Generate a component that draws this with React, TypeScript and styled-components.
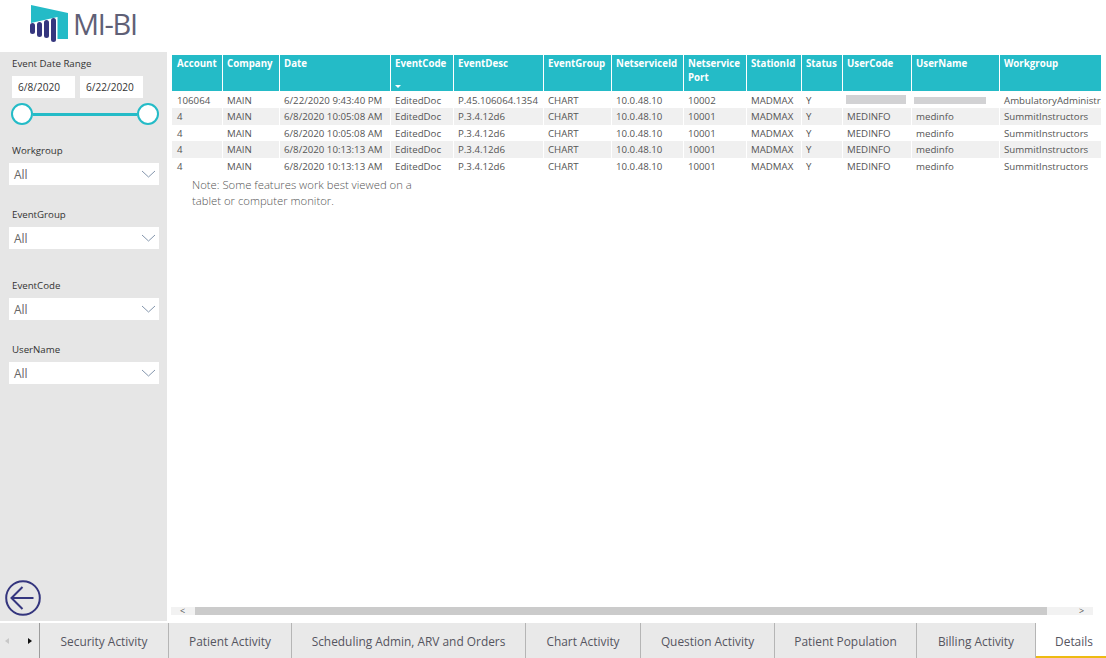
import React from "react";
import styled, { createGlobalStyle } from "styled-components";

const TEAL = "#24bbc7";
const NAVY = "#35367e";

const COLUMNS = [50, 56, 110, 62, 89, 67, 71, 62, 54, 40, 68, 87, 102];

const HEADERS = [
  "Account",
  "Company",
  "Date",
  "EventCode",
  "EventDesc",
  "EventGroup",
  "NetserviceId",
  "Netservice Port",
  "StationId",
  "Status",
  "UserCode",
  "UserName",
  "Workgroup",
];

const shared = ["EditedDoc", "P.3.4.12d6", "CHART", "10.0.48.10", "10001", "MADMAX", "Y", "MEDINFO", "medinfo", "SummitInstructors"];

const ROWS = [
  ["106064", "MAIN", "6/22/2020 9:43:40 PM", "EditedDoc", "P.45.106064.1354", "CHART", "10.0.48.10", "10002", "MADMAX", "Y", "", "", "AmbulatoryAdministrators"],
  ["4", "MAIN", "6/8/2020 10:05:08 AM", ...shared],
  ["4", "MAIN", "6/8/2020 10:05:08 AM", ...shared],
  ["4", "MAIN", "6/8/2020 10:13:13 AM", ...shared],
  ["4", "MAIN", "6/8/2020 10:13:13 AM", ...shared],
];

const SLICERS = [
  { name: "Workgroup", gap: 20 },
  { name: "EventGroup", gap: 24 },
  { name: "EventCode", gap: 31 },
  { name: "UserName", gap: 24 },
];

const TABS = [
  { label: "Security Activity", width: 129 },
  { label: "Patient Activity", width: 123 },
  { label: "Scheduling Admin, ARV and Orders", width: 234 },
  { label: "Chart Activity", width: 115 },
  { label: "Question Activity", width: 134 },
  { label: "Patient Population", width: 142 },
  { label: "Billing Activity", width: 119 },
];

const GlobalStyle = createGlobalStyle`
  html, body {
    margin: 0;
    padding: 0;
    background: #fff;
    font-family: "Open Sans", "Noto Sans", sans-serif;
    overflow: hidden;
  }
`;

const Page = styled.div`
  width: 1106px;
  height: 658px;
  display: flex;
  flex-direction: column;
  overflow: hidden;
`;

const Header = styled.header`
  height: 52px;
  flex: none;
  display: flex;
  align-items: flex-start;
  padding: 4px 0 0 29px;
  box-sizing: border-box;
`;

const LogoText = styled.span`
  font-family: "Open Sans", sans-serif;
  font-weight: 400;
  font-size: 29px;
  line-height: 40px;
  letter-spacing: -1.3px;
  color: #5f6076;
  margin-left: 4px;
`;

const Body = styled.div`
  flex: 1;
  display: flex;
  min-height: 0;
`;

const Sidebar = styled.aside`
  width: 167px;
  flex: none;
  background: #e6e6e6;
  display: flex;
  flex-direction: column;
  padding: 6px 8px 4px 10px;
  box-sizing: border-box;
`;

const SlicerLabel = styled.div`
  font-size: 9.7px;
  line-height: 12px;
  color: #333;
  margin-left: 2px;
`;

const DateRow = styled.div`
  display: flex;
  gap: 5px;
  margin: 6px 0 0 2px;
`;

const DateBox = styled.div`
  width: 63px;
  height: 22px;
  background: #fff;
  font-size: 10.1px;
  line-height: 22px;
  color: #333;
  padding-left: 6px;
  box-sizing: border-box;
`;

const Slider = styled.div`
  margin: 5px 0 0 1px;
  display: flex;
  align-items: center;
  width: 148px;
`;

const Knob = styled.div`
  width: 22px;
  height: 22px;
  flex: none;
  border-radius: 50%;
  border: 2px solid ${TEAL};
  background: #fff;
  box-sizing: border-box;
`;

const Track = styled.div`
  flex: 1;
  height: 3px;
  background: ${TEAL};
`;

const Slicer = styled.div<{ $gap: number }>`
  margin-top: ${(p) => p.$gap}px;
`;

const Dropdown = styled.div`
  margin: 6px 0 0 -1px;
  height: 22px;
  width: 150px;
  background: #fff;
  display: flex;
  align-items: center;
  justify-content: space-between;
  padding: 0 3px 0 5px;
  box-sizing: border-box;
  font-size: 12px;
  color: #666;
`;

const BackButton = styled.div`
  margin: auto 0 0 -5px;
  line-height: 0;
`;

const Main = styled.main`
  flex: 1;
  min-width: 0;
  display: flex;
  flex-direction: column;
  padding: 3px 0 6px 5px;
  box-sizing: border-box;
`;

const Table = styled.div`
  width: 929px;
  overflow: hidden;
  display: grid;
  grid-template-columns: ${COLUMNS.map((c) => `${c}px`).join(" ")};
  column-gap: 1px;
`;

const HeadCell = styled.div`
  height: 36px;
  background: ${TEAL};
  color: #fff;
  font-size: 9.7px;
  font-weight: 700;
  line-height: 14px;
  padding: 2px 1px 0 4px;
  box-sizing: border-box;
  position: relative;
  margin-bottom: 1px;

  &:nth-child(13n + 1) {
    padding-left: 5px;
  }
`;

const SortMark = styled.span`
  position: absolute;
  left: 4px;
  bottom: 3px;
  width: 0;
  height: 0;
  border-left: 3.5px solid transparent;
  border-right: 3.5px solid transparent;
  border-top: 3px solid #fff;
`;

const Cell = styled.div<{ $shaded: boolean }>`
  height: 16.4px;
  background: ${(p) => (p.$shaded ? "#f0f0f0" : "#fff")};
  color: #555;
  font-size: 9.7px;
  line-height: 17px;
  padding-left: 4px;
  white-space: nowrap;
  overflow: hidden;
  position: relative;

  &:nth-child(13n + 1) {
    padding-left: 5px;
  }
`;

const Redacted = styled.span<{ $left: number; $top: number; $width: number; $height: number }>`
  position: absolute;
  top: ${(p) => p.$top}px;
  left: ${(p) => p.$left}px;
  width: ${(p) => p.$width}px;
  height: ${(p) => p.$height}px;
  background: #d2d2d4;
`;

const Note = styled.p`
  margin: 3px 0 0 20px;
  width: 232px;
  font-size: 11.3px;
  font-weight: 300;
  line-height: 16px;
  color: #555;
`;

const ScrollBar = styled.div`
  margin: auto 0 0 -1px;
  width: 922px;
  height: 8px;
  background: #f2f2f2;
  display: flex;
  align-items: center;
  font-size: 9px;
  color: #555;
`;

const ScrollArrow = styled.span`
  width: 23px;
  flex: none;
  text-align: center;
  line-height: 8px;
`;

const ScrollThumb = styled.div`
  flex: 1;
  height: 8px;
  background: #cbcbcb;
  margin: 0 23px 0 1px;
`;

const TabBar = styled.nav`
  height: 36px;
  flex: none;
  display: flex;
  background: #e9e9e9;
  margin-top: 1px;
  border-top: 1px solid #fff;
  box-sizing: border-box;
`;

const TabArrows = styled.div`
  width: 40px;
  flex: none;
  display: flex;
  align-items: center;
  justify-content: space-between;
  padding: 0 7px 0 5px;
  box-sizing: border-box;
  border-right: 1px solid #9c9c9c;
`;

const Arrow = styled.span<{ $on: boolean }>`
  width: 0;
  height: 0;
  border-top: 3.5px solid transparent;
  border-bottom: 3.5px solid transparent;
  ${(p) => (p.$on ? "border-left: 4px solid #111;" : "border-right: 4px solid #c8c8c8;")}
`;

const Tab = styled.div<{ $width: number }>`
  width: ${(p) => p.$width}px;
  flex: none;
  text-align: center;
  font-size: 11.9px;
  font-weight: 500;
  line-height: 36px;
  color: #55555f;
  white-space: nowrap;
  border-right: 1px solid #b5b5b5;
  box-sizing: border-box;
`;

const ActiveTab = styled.div`
  flex: 1;
  background: #fff;
  text-align: center;
  font-size: 11.9px;
  font-weight: 500;
  line-height: 36px;
  color: #55555f;
  padding-left: 6px;
  border-bottom: 2px solid #edbb12;
  box-sizing: border-box;
`;

function Logo() {
  return (
    <svg width="40" height="40" viewBox="0 0 40 40">
      <path d="M2 1 L39 9 V35 H28.5 V13 L2 19 Z" fill={TEAL} />
      <rect x="1" y="19" width="5" height="11" rx="2.5" fill={NAVY} />
      <rect x="8" y="18" width="5" height="15" rx="2.5" fill={NAVY} />
      <rect x="15" y="16" width="5" height="18" rx="2.5" fill={NAVY} />
      <rect x="22" y="14" width="5" height="24" rx="2.5" fill={NAVY} />
    </svg>
  );
}

function Chevron() {
  return (
    <svg width="15" height="8" viewBox="0 0 15 8">
      <path d="M1 1 L7.5 7 L14 1" fill="none" stroke="#8496ad" strokeWidth="1" />
    </svg>
  );
}

function BackArrow() {
  return (
    <svg width="37" height="37" viewBox="0 0 37 37">
      <circle cx="18" cy="18" r="16.8" fill="none" stroke={NAVY} strokeWidth="2" />
      <path d="M28.5 18 H6.5 M17.5 7 L6.5 18 L17.5 29" fill="none" stroke={NAVY} strokeWidth="2" />
    </svg>
  );
}

export default function App() {
  return (
    <Page>
      <GlobalStyle />
      <Header>
        <Logo />
        <LogoText>MI-BI</LogoText>
      </Header>
      <Body>
        <Sidebar>
          <SlicerLabel>Event Date Range</SlicerLabel>
          <DateRow>
            <DateBox>6/8/2020</DateBox>
            <DateBox>6/22/2020</DateBox>
          </DateRow>
          <Slider>
            <Knob />
            <Track />
            <Knob />
          </Slider>
          {SLICERS.map((s) => (
            <Slicer key={s.name} $gap={s.gap}>
              <SlicerLabel>{s.name}</SlicerLabel>
              <Dropdown>
                All
                <Chevron />
              </Dropdown>
            </Slicer>
          ))}
          <BackButton>
            <BackArrow />
          </BackButton>
        </Sidebar>
        <Main>
          <Table>
            {HEADERS.map((h) => (
              <HeadCell key={h}>
                {h}
                {h === "EventCode" && <SortMark />}
              </HeadCell>
            ))}
            {ROWS.map((row, r) =>
              row.map((value, c) => (
                <Cell key={`${r}-${c}`} $shaded={r % 2 === 1}>
                  {value}
                  {r === 0 && c === 10 && <Redacted $left={3} $top={3} $width={60} $height={9} />}
                  {r === 0 && c === 11 && <Redacted $left={2} $top={5} $width={72} $height={7} />}
                </Cell>
              ))
            )}
          </Table>
          <Note>Note: Some features work best viewed on a tablet or computer monitor.</Note>
          <ScrollBar>
            <ScrollArrow>&lt;</ScrollArrow>
            <ScrollThumb />
            <ScrollArrow>&gt;</ScrollArrow>
          </ScrollBar>
        </Main>
      </Body>
      <TabBar>
        <TabArrows>
          <Arrow $on={false} />
          <Arrow $on={true} />
        </TabArrows>
        {TABS.map((t) => (
          <Tab key={t.label} $width={t.width}>
            {t.label}
          </Tab>
        ))}
        <ActiveTab>Details</ActiveTab>
      </TabBar>
    </Page>
  );
}
